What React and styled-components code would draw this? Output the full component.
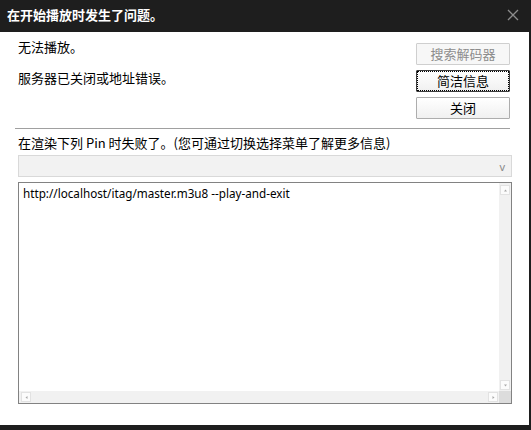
import React from "react";
import styled, { createGlobalStyle } from "styled-components";

const GlobalStyle = createGlobalStyle`
  html, body {
    margin: 0;
    padding: 0;
    background: #1e1e1e;
  }
`;

const cjk = `"Noto Sans CJK SC", "Noto Sans", sans-serif`;

const Window = styled.div`
  width: 531px;
  height: 430px;
  box-sizing: border-box;
  background: #1e1e1e;
  padding: 0 2px 5px 0;
  display: flex;
  flex-direction: column;
  font-family: ${cjk};
`;

const TitleBar = styled.div`
  height: 32px;
  flex: none;
  display: flex;
  align-items: center;
  justify-content: space-between;
  padding: 0 12px 0 7px;
  margin-right: -2px;
`;

const Title = styled.div`
  color: #ffffff;
  font-size: 13px;
  font-weight: bold;
  line-height: 16px;
  margin-top: -2px;
`;

const CloseIcon = styled.svg`
  width: 12px;
  height: 12px;
  margin-top: -2px;
`;

const Client = styled.div`
  flex: 1;
  background: #ffffff;
  padding: 0 17px 0 18px;
  display: flex;
  flex-direction: column;
`;

const TopRow = styled.div`
  display: flex;
  justify-content: space-between;
`;

const Messages = styled.div`
  padding-top: 7px;
  display: flex;
  flex-direction: column;
  gap: 15px;
`;

const Message = styled.div`
  font-size: 13px;
  line-height: 16px;
  color: #000;
`;

const Buttons = styled.div`
  padding-top: 11px;
  margin-right: 2px;
  display: flex;
  flex-direction: column;
  gap: 5px;
`;

const Button = styled.button`
  width: 94px;
  height: 22px;
  box-sizing: border-box;
  font-family: ${cjk};
  font-size: 13px;
  line-height: 18px;
  padding: 0;
  border-radius: 1px;
  border: 1px solid ${(p) => (p.disabled ? "#cfcfcf" : "#adadad")};
  color: ${(p) => (p.disabled ? "#8d8d8d" : "#000")};
  background: ${(p) =>
    p.disabled ? "#f7f7f7" : "linear-gradient(#ffffff, #f0f0f0)"};
  outline: ${(p) => (p.focused ? "1px dotted #000" : "none")};
  outline-offset: -2px;
  ${(p) => p.focused && "border-color: #3c3c3c;"}
`;

const Separator = styled.div`
  height: 1px;
  background: #a0a0a0;
  margin: 9px 2px 0 -3px;
`;

const Label = styled.div`
  font-size: 13px;
  line-height: 16px;
  margin-top: 6px;
  color: #000;
`;

const Combo = styled.div`
  margin-top: 4px;
  height: 22px;
  box-sizing: border-box;
  border: 1px solid #d9d9d9;
  background: #f2f2f2;
  display: flex;
  align-items: center;
  justify-content: flex-end;
  padding-right: 6px;
  color: #8a8a8a;
  font-family: "Noto Sans", sans-serif;
  font-size: 11px;
`;

const Output = styled.div`
  margin-top: 5px;
  height: 222px;
  box-sizing: border-box;
  border: 1px solid #828282;
  display: grid;
  grid-template-columns: 1fr 12px;
  grid-template-rows: 1fr 12px;
`;

const OutputText = styled.div`
  padding: 2px 4px;
  font-family: "Noto Sans", sans-serif;
  font-size: 11.7px;
  line-height: 16px;
  color: #000;
`;

const ScrollTrack = styled.div`
  background: #f1f1f1;
  display: flex;
  flex-direction: ${(p) => (p.vertical ? "column" : "row")};
  justify-content: space-between;
  align-items: center;
  padding: ${(p) => (p.vertical ? "2px 0 1px" : "0 1px 0 2px")};
`;

const ArrowBox = styled.div`
  width: 10px;
  height: 10px;
  box-sizing: border-box;
  border: 1px solid #e2e2e2;
  background: #fbfbfb;
  display: flex;
  align-items: center;
  justify-content: center;
`;

const Corner = styled.div`
  background: #dcdcdc;
`;

const arrowPoints = {
  up: "1,5 4,1 7,5",
  down: "1,1 4,5 7,1",
  left: "5,1 1,4 5,7",
  right: "1,1 5,4 1,7",
};

function Arrow({ dir }) {
  const w = dir === "up" || dir === "down" ? 8 : 6;
  const h = dir === "up" || dir === "down" ? 6 : 8;
  return (
    <ArrowBox>
      <svg width={w - 3} height={h - 3} viewBox={`0 0 ${w} ${h}`}>
        <polygon points={arrowPoints[dir]} fill="#a8a8a8" />
      </svg>
    </ArrowBox>
  );
}

export default function App() {
  return (
    <>
      <GlobalStyle />
      <Window>
        <TitleBar>
          <Title>在开始播放时发生了问题。</Title>
          <CloseIcon viewBox="0 0 12 12">
            <path d="M1 1 L11 11 M11 1 L1 11" stroke="#8c8c8c" strokeWidth="1.3" />
          </CloseIcon>
        </TitleBar>
        <Client>
          <TopRow>
            <Messages>
              <Message>无法播放。</Message>
              <Message>服务器已关闭或地址错误。</Message>
            </Messages>
            <Buttons>
              <Button disabled>搜索解码器</Button>
              <Button focused>简洁信息</Button>
              <Button>关闭</Button>
            </Buttons>
          </TopRow>
          <Separator />
          <Label>在渲染下列 Pin 时失败了。(您可通过切换选择菜单了解更多信息)</Label>
          <Combo>v</Combo>
          <Output>
            <OutputText>http://localhost/itag/master.m3u8 --play-and-exit</OutputText>
            <ScrollTrack vertical>
              <Arrow dir="up" />
              <Arrow dir="down" />
            </ScrollTrack>
            <ScrollTrack>
              <Arrow dir="left" />
              <Arrow dir="right" />
            </ScrollTrack>
            <Corner />
          </Output>
        </Client>
      </Window>
    </>
  );
}
